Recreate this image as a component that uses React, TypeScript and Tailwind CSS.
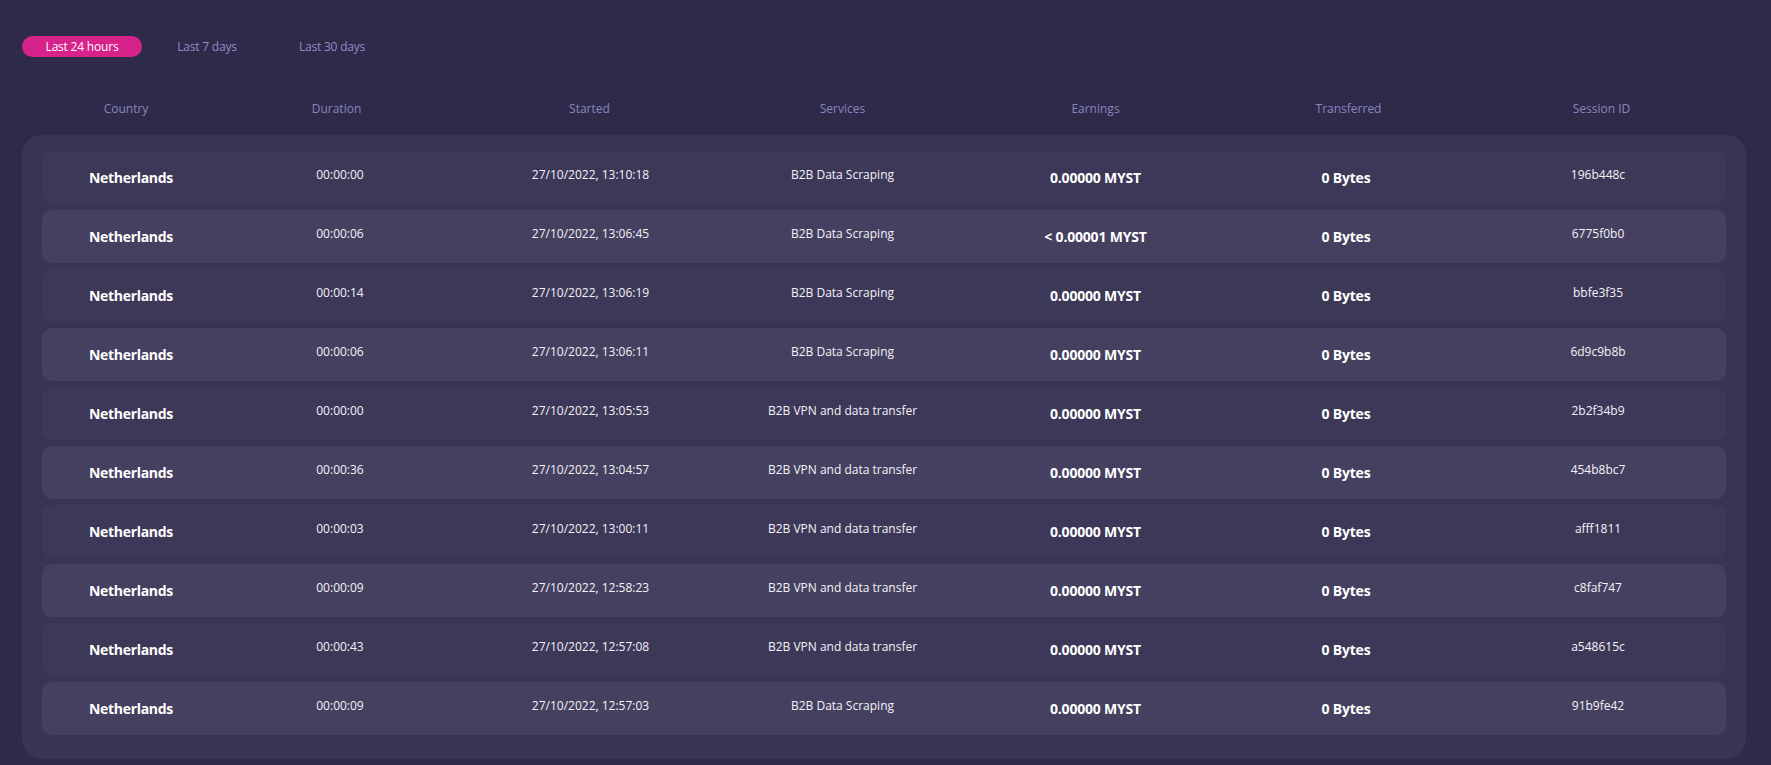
import React from "react";

type Row = {
  duration: string;
  started: string;
  service: string;
  earnings: string;
  session: string;
};

const rows: Row[] = [
  { duration: "00:00:00", started: "27/10/2022, 13:10:18", service: "B2B Data Scraping", earnings: "0.00000 MYST", session: "196b448c" },
  { duration: "00:00:06", started: "27/10/2022, 13:06:45", service: "B2B Data Scraping", earnings: "< 0.00001 MYST", session: "6775f0b0" },
  { duration: "00:00:14", started: "27/10/2022, 13:06:19", service: "B2B Data Scraping", earnings: "0.00000 MYST", session: "bbfe3f35" },
  { duration: "00:00:06", started: "27/10/2022, 13:06:11", service: "B2B Data Scraping", earnings: "0.00000 MYST", session: "6d9c9b8b" },
  { duration: "00:00:00", started: "27/10/2022, 13:05:53", service: "B2B VPN and data transfer", earnings: "0.00000 MYST", session: "2b2f34b9" },
  { duration: "00:00:36", started: "27/10/2022, 13:04:57", service: "B2B VPN and data transfer", earnings: "0.00000 MYST", session: "454b8bc7" },
  { duration: "00:00:03", started: "27/10/2022, 13:00:11", service: "B2B VPN and data transfer", earnings: "0.00000 MYST", session: "afff1811" },
  { duration: "00:00:09", started: "27/10/2022, 12:58:23", service: "B2B VPN and data transfer", earnings: "0.00000 MYST", session: "c8faf747" },
  { duration: "00:00:43", started: "27/10/2022, 12:57:08", service: "B2B VPN and data transfer", earnings: "0.00000 MYST", session: "a548615c" },
  { duration: "00:00:09", started: "27/10/2022, 12:57:03", service: "B2B Data Scraping", earnings: "0.00000 MYST", session: "91b9fe42" },
];

const headers = ["Country", "Duration", "Started", "Services", "Earnings", "Transferred", "Session ID"];

const grid = "grid grid-cols-[168px_253px_253px_253px_253px_253px_253px]";

export default function App() {
  return (
    <div
      className="min-h-[765px] w-full bg-[#2f2a49] pt-[36px] pl-[22px] pr-[25px]"
      style={{ fontFamily: '"Open Sans", "Noto Sans", sans-serif' }}
    >
      <div className="flex gap-[5px]">
        <button className="h-[21px] w-[120px] rounded-full bg-[#d7218b] text-[12px] leading-[21px] tracking-[-0.2px] text-white">
          Last 24 hours
        </button>
        <button className="h-[21px] w-[120px] rounded-full text-[12px] leading-[21px] tracking-[-0.2px] text-[#8f8dc7]">
          Last 7 days
        </button>
        <button className="h-[21px] w-[120px] rounded-full text-[12px] leading-[21px] tracking-[-0.2px] text-[#8f8dc7]">
          Last 30 days
        </button>
      </div>

      <div className={`${grid} mt-[39px] ml-[20px] h-[25px] items-center`}>
        {headers.map((h) => (
          <div key={h} className="text-center text-[12px] text-[#8886c0]">
            {h}
          </div>
        ))}
      </div>

      <div className="mt-[14px] flex flex-col gap-[6px] rounded-[20px] bg-[#3a3453] px-[20px] pt-[16px] pb-[24px]">
        {rows.map((r, i) => (
          <div
            key={r.session}
            className={`${grid} h-[53px] items-center rounded-[10px] ${i % 2 === 0 ? "bg-[#3e3858]" : "bg-[#45405f]"}`}
          >
            <div className="pl-[10px] text-center text-[14px] font-bold tracking-[-0.3px] text-white">Netherlands</div>
            <div className="pb-[5px] pl-[7px] text-center text-[12px] text-[#f3f2f8]">{r.duration}</div>
            <div className="pb-[5px] pl-[2px] text-center text-[12px] text-[#f3f2f8]">{r.started}</div>
            <div className="pb-[5px] text-center text-[12px] text-[#f3f2f8]">{r.service}</div>
            <div className="text-center text-[14px] font-bold tracking-[-0.2px] text-white">{r.earnings}</div>
            <div className="pr-[5px] text-center text-[14px] font-bold tracking-[-0.2px] text-white">0 Bytes</div>
            <div className="pb-[5px] pr-[7px] text-center text-[12px] text-[#f3f2f8]">{r.session}</div>
          </div>
        ))}
      </div>
    </div>
  );
}
